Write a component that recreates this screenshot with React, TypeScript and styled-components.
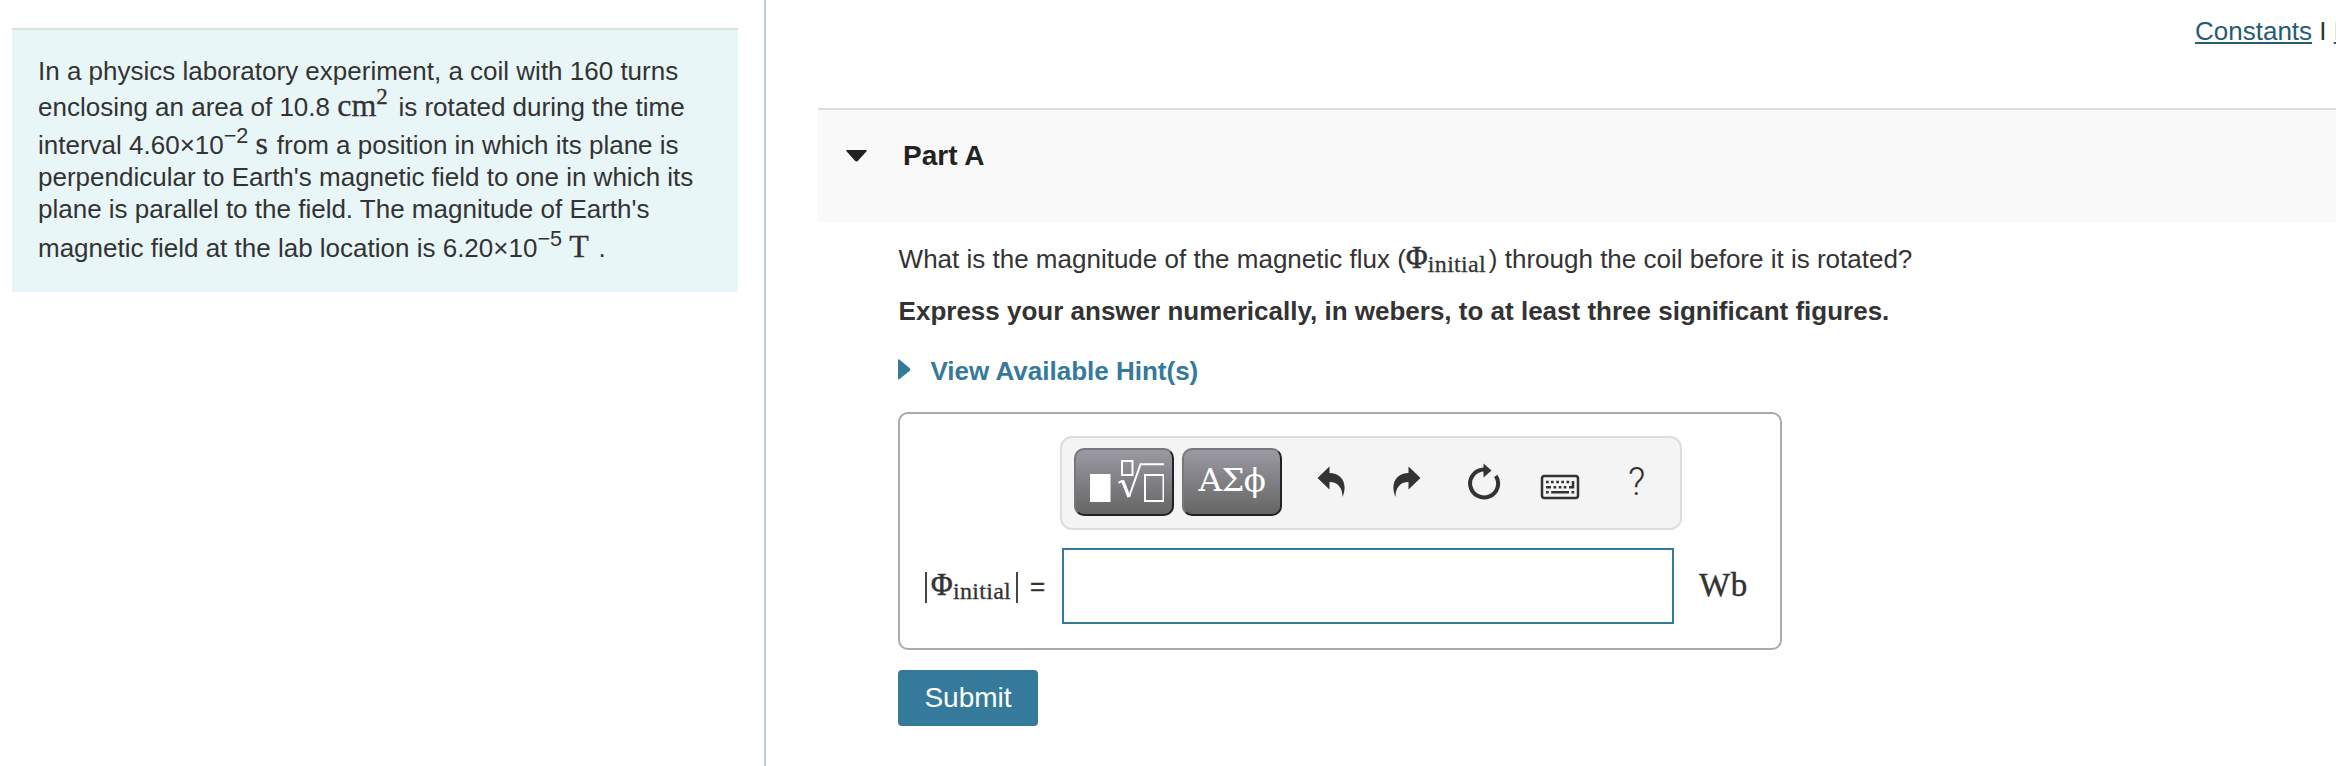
import React from "react";
import styled, { createGlobalStyle } from "styled-components";

const GlobalStyle = createGlobalStyle`
  html, body { margin: 0; padding: 0; background: #fff; overflow: hidden; }
  *, *::before, *::after { box-sizing: border-box; }
`;

const Page = styled.div`
  display: flex;
  width: 2336px;
  height: 766px;
  overflow: hidden;
  color: #333;
  font-family: "Liberation Sans", Arial, sans-serif;
  font-size: 26px;
  line-height: 32px;
`;

const Sidebar = styled.aside`
  flex: none;
  width: 766px;
  padding: 28px 26px 0 12px;
  border-right: 2px solid #bfcbda;
`;

const Problem = styled.section`
  height: 264px;
  padding: 25px 0 0 26px;
  border-top: 2px solid #dddde0;
  background: #e8f6f7;
`;

const Line = styled.div<{ $gap?: number }>`
  height: 32px;
  margin-top: ${({ $gap = 0 }) => $gap}px;
  white-space: pre;
`;

const Question = styled(Line)`
  margin-left: 0.6px;
`;

const Sup = styled.sup`
  font-size: 21.6px;
  line-height: 0;
  vertical-align: 11px;
`;

const Math = styled.span<{ $width?: number }>`
  display: inline-block;
  width: ${({ $width }) => ($width ? `${$width}px` : "auto")};
  height: 32px;
  font-family: "Liberation Serif", "Times New Roman", serif;
  font-size: 32px;
  line-height: 32px;
  white-space: nowrap;
  vertical-align: baseline;
  margin: -6px 0;
  -webkit-text-stroke: 0.3px currentColor;
`;

const MathSup = styled.sup`
  font-size: 23px;
  line-height: 0;
  vertical-align: 12px;
`;

const MathSub = styled.sub`
  font-size: 24px;
  line-height: 0;
  vertical-align: -4px;
  letter-spacing: 0.3px;
`;

const Phi = styled.span`
  display: inline-block;
  width: 22px;
  transform: scaleX(0.92);
  transform-origin: left;
  -webkit-text-stroke: 0.7px currentColor;
`;

const Main = styled.main`
  flex: none;
  width: 1570px;
  padding-left: 52px;
  overflow: hidden;
`;

const TopLinks = styled.nav`
  height: 108px;
  padding: 15px 0 0 1377px;
  white-space: pre;
`;

const TopLink = styled.a`
  color: #255c74;
  text-decoration: underline;
  text-decoration-thickness: 2px;
  text-underline-offset: 2px;
  text-decoration-skip-ink: none;
`;

const PartHeader = styled.header`
  display: flex;
  height: 114px;
  padding: 30px 0 0 28px;
  border-top: 2px solid #ddd;
  background: #f9f9f9;
`;

const PartTitle = styled.h2`
  margin: 0 0 0 36px;
  color: #222;
  font-size: 28px;
  line-height: 32px;
`;

const DownCaret = styled.svg`
  margin-top: 10px;
`;

const Body = styled.div`
  padding: 21px 0 0 80px;
`;

const Instruction = styled.div`
  height: 32px;
  margin: 20px 0 0 0.6px;
  font-weight: bold;
`;

const HintLink = styled.div`
  display: flex;
  height: 32px;
  margin-top: 28px;
  color: #35799b;
  font-weight: bold;

  svg { margin: 4px 19.5px 0 0; }
`;

const AnswerBox = styled.div`
  width: 884px;
  height: 238px;
  margin-top: 25px;
  padding: 22px 0 0 24px;
  border: 2px solid #aaa;
  border-radius: 10px;
`;

const Toolbar = styled.div`
  display: flex;
  width: 622px;
  height: 94px;
  margin-left: 136px;
  padding: 10px 12px;
  border: 2px solid #ddd;
  border-radius: 12px;
  background: #f4f4f4;
`;

const PaletteButton = styled.button`
  flex: none;
  display: flex;
  align-items: center;
  justify-content: center;
  width: 100px;
  height: 68px;
  margin: 0 8px 0 0;
  padding: 0 0 4px;
  border: 2px solid;
  border-color: #777 #222 #222 #777;
  border-radius: 10px;
  background: linear-gradient(#9b99a3, #656565);
  color: #fff;
  font-family: "DejaVu Serif", serif;
  font-size: 32.5px;
  letter-spacing: -0.6px;
  line-height: 40px;

  svg { flex: none; margin: 0 -4px -4px 0; }
`;

const Actions = styled.div`
  display: flex;
  flex: none;
  margin-left: 2.5px;
`;

const IconButton = styled.button<{ $drop?: number }>`
  flex: none;
  display: flex;
  align-items: center;
  justify-content: center;
  width: 76.5px;
  height: 68px;
  padding: ${({ $drop = 0 }) => $drop}px 0 0;
  border: 0;
  background: none;
  color: #333;
  font-family: Roboto, sans-serif;
  font-size: 38px;
  font-weight: 300;
`;

const AnswerRow = styled.div`
  display: flex;
  height: 76px;
  margin-top: 18px;
`;

const AnswerLabel = styled.div`
  display: flex;
  flex: none;
  width: 138px;
  padding: 22px 0 0 1px;
`;

const Bar = styled.span`
  width: 2px;
  height: 31px;
  margin-top: 2px;
  background: #444;
`;

const Symbol = styled.div`
  width: 89px;
  padding-left: 4px;
`;

const Equals = styled.span`
  margin-left: 12px;
  -webkit-text-stroke: 0.4px currentColor;
`;

const AnswerInput = styled.input`
  width: 612px;
  height: 76px;
  padding: 0 12px;
  border: 2px solid #35799b;
  border-radius: 0;
  outline: none;
  background: #fff;
  font: inherit;
`;

const Unit = styled.div`
  margin: 19px 0 0 25px;
  font-family: "Liberation Serif", serif;
  font-size: 33px;
  letter-spacing: 0.6px;
  line-height: 36px;
  -webkit-text-stroke: 0.4px currentColor;
`;

const Submit = styled.button`
  display: block;
  width: 140px;
  height: 56px;
  margin-top: 20px;
  padding: 0;
  border: 0;
  border-radius: 4px;
  background: #35799b;
  color: #fff;
  font: 28px "Liberation Sans", Arial, sans-serif;
`;

const PhiInitial = ({ width }: { width?: number }) => (
  <Math $width={width}>
    <Phi>Φ</Phi>
    <MathSub>initial</MathSub>
  </Math>
);

const TemplateIcon = () => (
  <svg width="76" height="46" viewBox="0 0 76 46" fill="none" stroke="#fff">
    <rect x="2" y="15" width="20.5" height="28" fill="#fff" stroke="none" />
    <rect x="34" y="2" width="10.5" height="14" strokeWidth="2" />
    <path d="M30.5 23.8 34.5 21.5" strokeWidth="2" />
    <path d="M34.5 21.5 41 38" strokeWidth="3.4" />
    <path d="M41 38 52.5 5.3H76" strokeWidth="2" />
    <rect x="57" y="16" width="18.500" height="26" strokeWidth="2" />
  </svg>
);

const UndoIcon = ({ flipped = false }: { flipped?: boolean }) => (
  <svg width="28" height="32" viewBox="0 0 28 32" fill="currentColor">
    <path
      transform={flipped ? "translate(28 0) scale(-1 1)" : undefined}
      d="M.5 12 12.5.5V7C24 7 31.5 17 25.500 31 25.500 22 21 16 12.500 16V23.500Z"
    />
  </svg>
);

const ResetIcon = () => (
  <svg width="34" height="40" viewBox="0 0 34 40" fill="none">
    <path d="M28.800 13.800A14 14 0 1 1 17 7.500" stroke="currentColor" strokeWidth="4" />
    <path d="M16.500 1.500 24.500 8.500 16.500 15.500Z" fill="currentColor" />
  </svg>
);

const KeyboardIcon = () => (
  <svg width="40" height="26" viewBox="0 0 40 26" fill="none" stroke="currentColor">
    <rect x="2" y="2" width="36" height="22" rx="2.500" strokeWidth="2.500" />
    <path d="M6 8H8.700M11 8H13.700M16.200 8H18.900M21.300 8H24M26.500 8H29.200" strokeWidth="2.500" />
    <path d="M6 13.200H11M13.500 13.200H16.200M18.700 13.200H21.400M23.700 13.200H26.400M29 13.200H34.200M33 7V13.500" strokeWidth="2.500" />
    <path d="M6 18.300H8.700M11.200 18.300H29M31.500 18.300H34.200" strokeWidth="2.500" />
  </svg>
);

export default function App() {
  return (
    <>
      <GlobalStyle />
      <Page>
        <Sidebar>
          <Problem>
            <Line>In a physics laboratory experiment, a coil with 160 turns</Line>
            <Line $gap={4}>
              {"enclosing an area of 10.8 "}
              <Math $width={54}>cm<MathSup>2</MathSup></Math>
              {" is rotated during the time"}
            </Line>
            <Line $gap={6}>
              interval 4.60×10<Sup>−2</Sup>{" "}
              <Math $width={14}>s</Math>
              {" from a position in which its plane is"}
            </Line>
            <Line>perpendicular to Earth's magnetic field to one in which its</Line>
            <Line>plane is parallel to the field. The magnitude of Earth's</Line>
            <Line $gap={7}>
              magnetic field at the lab location is 6.20×10<Sup>−5</Sup>{" "}
              <Math $width={22}>T</Math>
              {" ."}
            </Line>
          </Problem>
        </Sidebar>
        <Main>
          <TopLinks>
            <TopLink>Constants</TopLink>{" I "}<TopLink>Periodic Table</TopLink>
          </TopLinks>
          <PartHeader>
            <DownCaret width="21" height="12" viewBox="0 0 21 12">
              <path d="M1 0H20Q21.500 0 20.300 1.500L12 10.800Q10.500 12 9 10.800L.7 1.500Q-.5 0 1 0Z" fill="#222" />
            </DownCaret>
            <PartTitle>Part A</PartTitle>
          </PartHeader>
          <Body>
            <Question>
              What is the magnitude of the magnetic flux (
              <PhiInitial width={83} />
              ) through the coil before it is rotated?
            </Question>
            <Instruction>
              Express your answer numerically, in webers, to at least three significant figures.
            </Instruction>
            <HintLink>
              <svg width="13" height="21" viewBox="0 0 13 21">
                <path d="M0 1Q0-.3 1.300.6L11.500 9Q13 10.500 11.500 12L1.300 20.200Q0 21 0 19.800Z" fill="currentColor" />
              </svg>
              View Available Hint(s)
            </HintLink>
            <AnswerBox>
              <Toolbar>
                <PaletteButton aria-label="Templates"><TemplateIcon /></PaletteButton>
                <PaletteButton>ΑΣϕ</PaletteButton>
                <Actions>
                  <IconButton aria-label="Undo"><UndoIcon /></IconButton>
                  <IconButton aria-label="Redo"><UndoIcon flipped /></IconButton>
                  <IconButton aria-label="Reset"><ResetIcon /></IconButton>
                  <IconButton aria-label="Keyboard" $drop={10}><KeyboardIcon /></IconButton>
                  <IconButton>?</IconButton>
                </Actions>
              </Toolbar>
              <AnswerRow>
                <AnswerLabel>
                  <Bar />
                  <Symbol><PhiInitial /></Symbol>
                  <Bar />
                  <Equals>=</Equals>
                </AnswerLabel>
                <AnswerInput />
                <Unit>Wb</Unit>
              </AnswerRow>
            </AnswerBox>
            <Submit>Submit</Submit>
          </Body>
        </Main>
      </Page>
    </>
  );
}
